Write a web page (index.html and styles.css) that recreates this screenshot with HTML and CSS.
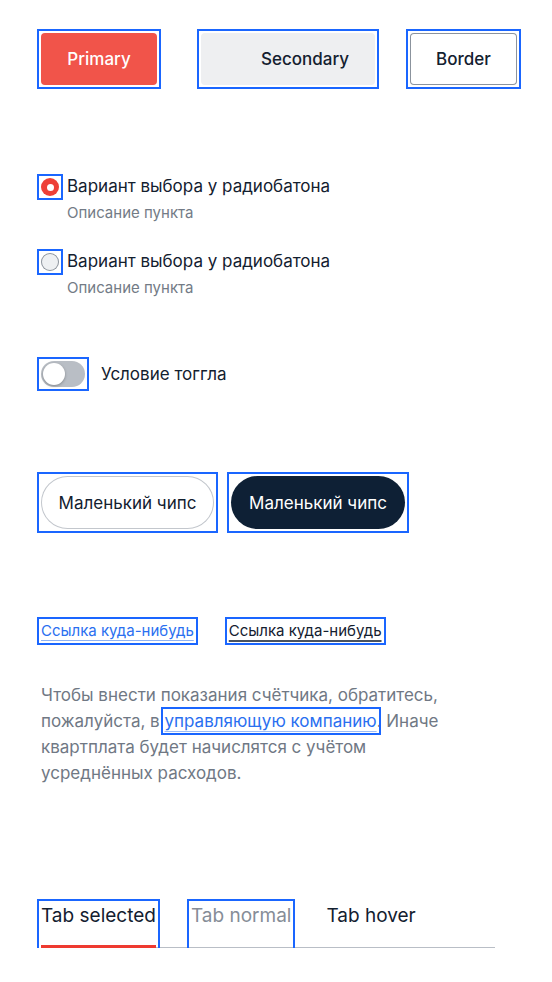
FILE: index.html
```html
<!DOCTYPE html>
<html lang="ru">
<head>
<meta charset="utf-8">
<title>UI kit</title>
<link rel="stylesheet" href="styles.css">
</head>
<body>
<main class="page">
  <div class="buttons">
    <button class="btn btn-primary focus">Primary</button>
    <button class="btn btn-secondary focus">Secondary</button>
    <button class="btn btn-border focus">Border</button>
  </div>

  <div class="radios">
    <div class="radio-item">
      <div class="radio-row">
        <span class="radio radio-on focus"></span>
        <span class="radio-label">Вариант выбора у радиобатона</span>
      </div>
      <div class="radio-desc">Описание пункта</div>
    </div>
    <div class="radio-item">
      <div class="radio-row">
        <span class="radio radio-off focus"></span>
        <span class="radio-label">Вариант выбора у радиобатона</span>
      </div>
      <div class="radio-desc">Описание пункта</div>
    </div>
  </div>

  <div class="toggle-row">
    <span class="toggle focus"><span class="knob"></span></span>
    <span class="toggle-label">Условие тоггла</span>
  </div>

  <div class="chips">
    <span class="chip chip-light focus">Маленький чипс</span>
    <span class="chip chip-dark focus">Маленький чипс</span>
  </div>

  <div class="links">
    <a class="link link-blue focus" href="#">Ссылка куда-нибудь</a>
    <a class="link link-dark focus" href="#">Ссылка куда-нибудь</a>
  </div>

  <p class="text">Чтобы внести показания счётчика, обратитесь,<br>пожалуйста, в <a class="inline-link focus" href="#">управляющую компанию</a>. Иначе<br>квартплата будет начислятся с учётом<br>усреднённых расходов.</p>

  <div class="tabs">
    <span class="tab tab-selected focus">Tab selected</span>
    <span class="tab tab-normal focus">Tab normal</span>
    <span class="tab tab-hover">Tab hover</span>
  </div>
</main>
</body>
</html>
```

FILE: styles.css
```css
* { box-sizing: border-box; }

body {
  margin: 0;
  background: #ffffff;
  font-family: Inter, "Noto Sans", "DejaVu Sans", sans-serif;
  color: #13202f;
}

.page {
  display: flex;
  flex-direction: column;
  padding: 33px 0 0 41px;
  width: 552px;
}

/* square focus ring drawn over the element */
.focus {
  position: relative;
}

.focus::before {
  content: "";
  position: absolute;
  top: -4px;
  right: -4px;
  bottom: -4px;
  left: -4px;
  border: 2px solid #1a66ff;
  pointer-events: none;
}

/* Buttons */
.buttons {
  display: flex;
  align-items: center;
  height: 52px;
}

.btn {
  height: 52px;
  border-radius: 4px;
  font-family: inherit;
  font-size: 17px;
  font-weight: 500;
  border: none;
  padding: 0;
  display: flex;
  align-items: center;
  justify-content: center;
}

.btn-primary {
  width: 116px;
  background: #f1544a;
  color: #ffffff;
}

.btn-secondary {
  width: 174px;
  margin-left: 44px;
  background: #eeeff1;
  color: #13202f;
  padding-left: 34px;
}

.btn-border {
  width: 107px;
  margin-left: 35px;
  background: #ffffff;
  box-shadow: inset 0 0 0 1px #8b939d;
  color: #13202f;
}

/* Radios */
.radios {
  margin-top: 89px;
  display: flex;
  flex-direction: column;
  gap: 25px;
}

.radio-row {
  display: flex;
  align-items: center;
  height: 24px;
}

.radio {
  width: 18px;
  height: 18px;
  border-radius: 50%;
  flex: none;
  margin-top: 2px;
  display: flex;
  align-items: center;
  justify-content: center;
}

.radio-on {
  background: #ee4037;
}

.radio-on::after {
  content: "";
  width: 7px;
  height: 7px;
  border-radius: 50%;
  background: #ffffff;
}

.radio-off {
  background: #eef0f2;
  box-shadow: inset 0 0 0 1px #8e959e;
}

.radio-label {
  margin-left: 8px;
  font-size: 17px;
  line-height: 24px;
  color: #13202f;
}

.radio-desc {
  margin-top: 4px;
  margin-left: 26px;
  font-size: 15px;
  line-height: 22px;
  color: #737b86;
}

/* Toggle */
.toggle-row {
  margin-top: 62px;
  display: flex;
  align-items: center;
  height: 26px;
}

.toggle {
  width: 44px;
  height: 26px;
  border-radius: 13px;
  background: #b9bec5;
  flex: none;
}

.knob {
  position: absolute;
  left: 2px;
  top: 2px;
  width: 22px;
  height: 22px;
  border-radius: 50%;
  background: #ffffff;
  box-shadow: 0 1px 3px rgba(0, 0, 0, 0.3);
}

.toggle-label {
  margin-left: 16px;
  font-size: 17px;
  color: #13202f;
}

/* Chips */
.chips {
  margin-top: 89px;
  display: flex;
  gap: 17px;
}

.chip {
  height: 53px;
  border-radius: 27px;
  font-size: 17px;
  display: flex;
  align-items: center;
  justify-content: center;
}

.chip-light {
  width: 173px;
  box-shadow: inset 0 0 0 1px #c3c7cd;
  color: #13202f;
  background: #ffffff;
}

.chip-dark {
  width: 174px;
  background: #0e2035;
  color: #ffffff;
}

/* Links */
.links {
  margin-top: 92px;
  display: flex;
  gap: 35px;
}

.link {
  font-size: 15px;
  line-height: 20px;
  text-decoration: underline;
  text-underline-offset: 4px;
}

.link-blue {
  color: #2a6ff0;
  text-decoration-color: #8fb3f5;
  text-decoration-thickness: 1px;
}

.link-dark {
  color: #13202f;
  text-decoration-color: #4a5360;
  text-decoration-thickness: 2px;
}

/* Paragraph */
.text {
  margin: 41px 0 0 0;
  width: 470px;
  font-size: 17px;
  line-height: 26px;
  color: #707884;
}

.inline-link {
  color: #2a6ff0;
  text-decoration: underline;
  text-decoration-color: #9dbdf6;
  text-underline-offset: 4px;
}

/* Tabs */
.tabs {
  margin-top: 117px;
  width: 454px;
  display: flex;
  gap: 35px;
  border-bottom: 1px solid #b9bec6;
}

.tab {
  position: relative;
  font-size: 19px;
  line-height: 26px;
  height: 44px;
  color: #13202f;
}

.tab-normal {
  color: #868d97;
}

.tab-selected::after {
  content: "";
  position: absolute;
  left: 0;
  right: 0;
  bottom: -1px;
  height: 3px;
  background: #ee3a30;
}
```
